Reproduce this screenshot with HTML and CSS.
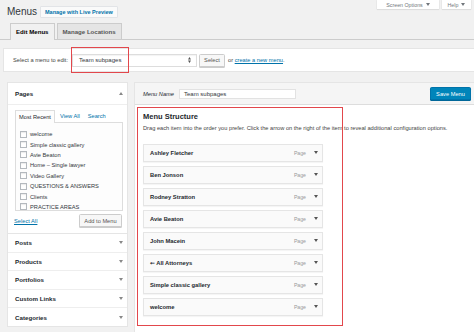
FILE: index.html
```html
<!DOCTYPE html>
<html>
<head>
<meta charset="utf-8">
<link rel="stylesheet" href="styles.css">
</head>
<body>
<div class="top">
  <div class="title-row">
    <h1 class="title">Menus</h1>
    <span class="live-btn">Manage with Live Preview</span>
  </div>
  <div class="screen-meta">
    <span class="meta-btn meta-wide">Screen Options <svg class="tri" width="4" height="3" viewBox="0 0 4 3"><path d="M0 0H4L2 3Z"/></svg></span>
    <span class="meta-btn">Help <svg class="tri" width="4" height="3" viewBox="0 0 4 3"><path d="M0 0H4L2 3Z"/></svg></span>
  </div>
</div>

<div class="tabs">
  <span class="tab active">Edit Menus</span>
  <span class="tab">Manage Locations</span>
</div>

<div class="manage-bar">
  <span class="bar-label">Select a menu to edit:</span>
  <div class="select-wrap">
    <span class="select">Team subpages
      <svg class="updown" width="3" height="6" viewBox="0 0 3 6"><path d="M0 2.4H3L1.5 0Z M0 3.6H3L1.5 6Z"/></svg>
    </span>
    <span class="highlight hl-select"></span>
  </div>
  <span class="btn select-btn">Select</span>
  <span class="or-text">or <a class="link">create a new menu</a>.</span>
</div>

<div class="columns">
  <div class="side">
    <div class="section pages">
      <div class="sec-head">Pages <svg class="tri up" width="4" height="3" viewBox="0 0 4 3"><path d="M0 3H4L2 0Z"/></svg></div>
      <div class="pages-body">
        <div class="ptabs">
          <span class="ptab active">Most Recent</span>
          <a class="ptab link-tab">View All</a>
          <a class="ptab link-tab">Search</a>
        </div>
        <div class="plist">
          <div class="prow"><span class="cb"></span>welcome</div>
          <div class="prow"><span class="cb"></span>Simple classic gallery</div>
          <div class="prow"><span class="cb"></span>Avie Beaton</div>
          <div class="prow"><span class="cb"></span>Home – Single lawyer</div>
          <div class="prow"><span class="cb"></span>Video Gallery</div>
          <div class="prow"><span class="cb"></span>QUESTIONS &amp; ANSWERS</div>
          <div class="prow"><span class="cb"></span>Clients</div>
          <div class="prow"><span class="cb"></span>PRACTICE AREAS</div>
        </div>
        <div class="pfoot">
          <a class="link">Select All</a>
          <span class="btn add-btn">Add to Menu</span>
        </div>
      </div>
    </div>
    <div class="section acc">Posts <svg class="tri" width="4" height="3" viewBox="0 0 4 3"><path d="M0 0H4L2 3Z"/></svg></div>
    <div class="section acc">Products <svg class="tri" width="4" height="3" viewBox="0 0 4 3"><path d="M0 0H4L2 3Z"/></svg></div>
    <div class="section acc">Portfolios <svg class="tri" width="4" height="3" viewBox="0 0 4 3"><path d="M0 0H4L2 3Z"/></svg></div>
    <div class="section acc">Custom Links <svg class="tri" width="4" height="3" viewBox="0 0 4 3"><path d="M0 0H4L2 3Z"/></svg></div>
    <div class="section acc">Categories <svg class="tri" width="4" height="3" viewBox="0 0 4 3"><path d="M0 0H4L2 3Z"/></svg></div>
  </div>

  <div class="menu-mgmt">
    <div class="menu-head">
      <span class="name-label">Menu Name</span>
      <span class="name-input">Team subpages</span>
      <span class="save-btn">Save Menu</span>
    </div>
    <div class="menu-body">
      <h3 class="struct-title">Menu Structure</h3>
      <p class="struct-desc">Drag each item into the order you prefer. Click the arrow on the right of the item to reveal additional configuration options.</p>
      <div class="items">
        <div class="item"><span class="item-title">Ashley Fletcher</span><span class="item-type">Page</span><svg class="item-arrow" width="4" height="3" viewBox="0 0 4 3"><path d="M0 0H4L2 3Z"/></svg></div>
        <div class="item"><span class="item-title">Ben Jonson</span><span class="item-type">Page</span><svg class="item-arrow" width="4" height="3" viewBox="0 0 4 3"><path d="M0 0H4L2 3Z"/></svg></div>
        <div class="item"><span class="item-title">Rodney Stratton</span><span class="item-type">Page</span><svg class="item-arrow" width="4" height="3" viewBox="0 0 4 3"><path d="M0 0H4L2 3Z"/></svg></div>
        <div class="item"><span class="item-title">Avie Beaton</span><span class="item-type">Page</span><svg class="item-arrow" width="4" height="3" viewBox="0 0 4 3"><path d="M0 0H4L2 3Z"/></svg></div>
        <div class="item"><span class="item-title">John Macein</span><span class="item-type">Page</span><svg class="item-arrow" width="4" height="3" viewBox="0 0 4 3"><path d="M0 0H4L2 3Z"/></svg></div>
        <div class="item"><span class="item-title"><span class="arrow-glyph">←</span> All Attorneys</span><span class="item-type">Page</span><svg class="item-arrow" width="4" height="3" viewBox="0 0 4 3"><path d="M0 0H4L2 3Z"/></svg></div>
        <div class="item"><span class="item-title">Simple classic gallery</span><span class="item-type">Page</span><svg class="item-arrow" width="4" height="3" viewBox="0 0 4 3"><path d="M0 0H4L2 3Z"/></svg></div>
        <div class="item"><span class="item-title">welcome</span><span class="item-type">Page</span><svg class="item-arrow" width="4" height="3" viewBox="0 0 4 3"><path d="M0 0H4L2 3Z"/></svg></div>
      </div>
      <span class="highlight hl-struct"></span>
    </div>
  </div>
</div>
</body>
</html>
```

FILE: styles.css
```css
* { box-sizing: border-box; }
html, body { margin: 0; padding: 0; }
body {
  background: #f1f1f1;
  font-family: "Liberation Sans", Arial, sans-serif;
  font-size: 5.7px;
  color: #444;
  width: 474px;
  height: 332px;
  overflow: hidden;
}
a { text-decoration: none; }
.link { color: #0073aa; text-decoration: underline; }

.top {
  display: flex;
  justify-content: space-between;
  align-items: flex-start;
  padding: 0 3px 0 7px;
  height: 23px;
}
.title-row {
  display: flex;
  align-items: center;
  gap: 3px;
  padding-top: 6px;
}
.title {
  margin: 0;
  font-size: 10px;
  font-weight: 400;
  line-height: 12px;
  color: #32373c;
}
.live-btn {
  height: 12px;
  line-height: 10px;
  padding: 0 4px;
  border: 1px solid #e2e4e7;
  background: #fafafa;
  color: #0073aa;
  font-weight: bold;
  font-size: 5.5px;
  border-radius: 1px;
}
.screen-meta { display: flex; gap: 3px; }
.meta-btn {
  display: flex;
  align-items: center;
  justify-content: center;
  gap: 3px;
  height: 9px;
  width: 29px;
  background: #fff;
  box-shadow: 0 0 0 0.5px rgba(0,0,0,.06), 0 1px 1px rgba(0,0,0,.05);
  font-size: 5.3px;
  color: #72777c;
}
.meta-wide { width: 62px; }
.tri { fill: #72777c; flex: none; }

.tabs {
  display: flex;
  gap: 2px;
  padding-left: 10px;
  height: 17px;
  border-bottom: 1px solid #ccc;
}
.tab {
  height: 16px;
  padding: 0 5px;
  line-height: 15px;
  border: 1px solid #ccc;
  border-bottom: none;
  background: #e5e5e5;
  color: #555;
  font-weight: bold;
  font-size: 6.1px;
}
.tab.active {
  background: #f1f1f1;
  color: #000;
  height: 17px;
}

.manage-bar {
  margin: 8px 0 0 3px;
  height: 24px;
  background: #fff;
  border: 1px solid #e5e5e5;
  border-right: none;
  display: flex;
  align-items: center;
  padding-left: 9px;
  color: #444;
}
.bar-label { margin-right: 4px; }
.select-wrap { position: relative; }
.select {
  display: flex;
  align-items: center;
  width: 125px;
  height: 13px;
  padding: 0 5px 0 6px;
  border: 1px solid #ddd;
  box-shadow: inset 0 1px 1px rgba(0,0,0,.05);
  background: #fff;
  color: #32373c;
  font-size: 6px;
}
.updown { margin-left: auto; fill: #555; }
.highlight {
  position: absolute;
  border: 1.5px solid #e2474c;
  pointer-events: none;
}
.hl-select { left: -1px; top: -7px; width: 58px; height: 26px; }
.btn {
  display: inline-flex;
  align-items: center;
  justify-content: center;
  height: 13px;
  border: 1px solid #ccc;
  background: #f7f7f7;
  box-shadow: 0 1px 0 #ccc;
  border-radius: 1.5px;
  color: #555;
}
.select-btn { width: 26px; margin-left: 2px; }
.or-text { margin-left: 3px; }

.columns {
  display: flex;
  gap: 6px;
  margin-top: 10px;
  padding-left: 7px;
  align-items: flex-start;
}
.side {
  width: 121px;
  flex: none;
  background: #fff;
  border: 1px solid #e5e5e5;
}
.sec-head {
  height: 22px;
  display: flex;
  align-items: center;
  justify-content: space-between;
  padding: 0 4px 0 7px;
  border-bottom: 1px solid #eee;
  font-weight: bold;
  font-size: 6.2px;
  color: #23282d;
}
.pages-body { padding: 5px 4px 6px 7px; }
.ptabs { display: flex; height: 12px; align-items: stretch; }
.ptab {
  display: flex;
  align-items: center;
  padding: 0 3px;
}
.ptab.active {
  border: 1px solid #ddd;
  border-bottom: none;
  background: #fdfdfd;
  color: #23282d;
  margin-bottom: -1px;
  position: relative;
}
.link-tab { color: #0073aa; margin-left: 2px; }
.plist {
  height: 89px;
  overflow: hidden;
  border: 1px solid #ddd;
  background: #fdfdfd;
  padding: 6px 0 0 4px;
}
.prow {
  height: 10.4px;
  display: flex;
  align-items: center;
  gap: 3px;
  color: #32373c;
}
.cb {
  width: 7px;
  height: 7px;
  border: 1px solid #b4b9be;
  background: #fff;
  box-shadow: inset 0 1px 1px rgba(0,0,0,.08);
  flex: none;
}
.pfoot {
  display: flex;
  justify-content: space-between;
  align-items: center;
  margin-top: 3px;
  padding-right: 1px;
}
.pfoot .link { margin-left: -1px; }
.add-btn { width: 43px; }
.acc {
  height: 18.6px;
  display: flex;
  align-items: center;
  justify-content: space-between;
  padding: 0 4px 0 7px;
  border-top: 1px solid #eee;
  font-weight: bold;
  font-size: 6.2px;
  color: #23282d;
}
.pages + .acc { border-top: 1px solid #e5e5e5; }
.acc .tri { fill: #888; }
.sec-head .tri { fill: #888; }

.menu-mgmt {
  flex: 1;
  background: #fff;
  border: 1px solid #e5e5e5;
  border-right: none;
  height: 260px;
}
.menu-head {
  height: 22px;
  display: flex;
  align-items: center;
  padding: 0 3px 0 8px;
  background: #f5f5f5;
  border-bottom: 1px solid #ddd;
}
.name-label { font-style: italic; color: #23282d; }
.name-input {
  margin-left: 5px;
  width: 117px;
  height: 10px;
  display: flex;
  align-items: center;
  padding-left: 4px;
  background: #fff;
  border: 1px solid #e2e2e2;
  font-size: 6px;
  color: #32373c;
}
.save-btn {
  margin-left: auto;
  width: 41px;
  height: 13px;
  display: flex;
  align-items: center;
  justify-content: center;
  background: #0085ba;
  border: 1px solid #0073aa;
  border-radius: 1.5px;
  box-shadow: 0 1px 0 #006799;
  color: #fff;
}
.menu-body {
  position: relative;
  padding: 7px 0 0 8px;
}
.struct-title {
  margin: 0;
  font-size: 7.5px;
  line-height: 9px;
  color: #23282d;
}
.struct-desc {
  margin: 4px 0 0;
  line-height: 7px;
  color: #444;
  white-space: nowrap;
}
.items { margin-top: 11.5px; width: 180px; display: flex; flex-direction: column; gap: 4px; }
.item {
  height: 18px;
  display: flex;
  align-items: center;
  padding: 0 4px 0 6px;
  background: #fafafa;
  border: 1px solid #e5e5e5;
  box-shadow: 0 1px 1px rgba(0,0,0,.04);
}
.item-title { font-weight: bold; color: #23282d; font-size: 5.8px; }
.arrow-glyph { font-family: "DejaVu Sans", sans-serif; font-weight: bold; }
.item-type { margin-left: auto; color: #999; font-size: 5.2px; }
.item-arrow { margin-left: 8px; fill: #555; }
.hl-struct { left: 2px; top: 2px; width: 206px; height: 219px; }
```
